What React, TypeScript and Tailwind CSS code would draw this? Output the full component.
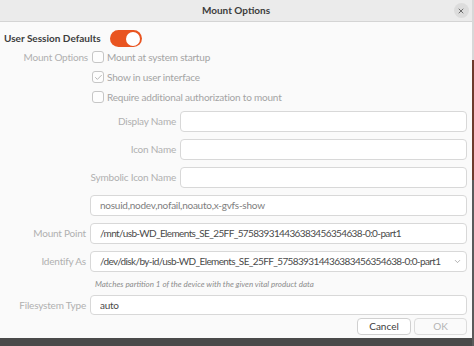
import { ChevronDown, Check, X } from "lucide-react";

const font = { fontFamily: 'Lato, "Noto Sans", sans-serif' };

const Entry = ({ value, dark, chevron, h = "h-[21px]", tight }: { value?: string; dark?: boolean; chevron?: boolean; h?: string; tight?: boolean }) => (
  <div className={`flex-1 min-w-0 ${h} rounded-[4px] border border-[#d8d8d8] bg-white flex items-center pl-[9px] pr-[4px]`}>
    <span
      className={`flex-1 min-w-0 whitespace-nowrap overflow-hidden text-[10px] ${tight ? "tracking-[-0.62px]" : "tracking-[-0.25px]"} ${dark ? "text-[#4a4a4a]" : "text-[#7e7e7e]"}`}
    >
      {value}
    </span>
    {chevron && <ChevronDown size={9} className="shrink-0 text-[#9a9a9a] ml-[2px]" />}
  </div>
);

const Label = ({ text, w }: { text?: string; w: string }) => (
  <div className={`${w} shrink-0 pr-[4px] text-right whitespace-nowrap text-[10px] tracking-[-0.2px] text-[#b0b0b0]`}>{text}</div>
);

const Check1 = ({ label, checked }: { label: string; checked?: boolean }) => (
  <div className="flex items-center h-[20px] gap-[3px]">
    <div className="w-[12px] h-[12px] rounded-[3px] border border-[#c6c6c6] bg-[#fdfdfd] flex items-center justify-center">
      {checked && <Check size={9} strokeWidth={2} className="text-[#a0a0a0]" />}
    </div>
    <span className="text-[10px] tracking-[-0.2px] text-[#a4a4a4]">{label}</span>
  </div>
);

const App = () => {
  return (
    <div className="w-[474px] h-[346px] bg-[#4a4a4a] overflow-hidden flex" style={font}>
      <div className="w-[472px] h-[338px] shrink-0 bg-[#fafafa] flex flex-col">
        <div className="h-[22px] shrink-0 bg-[#ebebeb] border-b border-[#d4d4d4] flex items-center">
          <div className="w-[22px]" />
          <div className="flex-1 text-center text-[10px] font-bold text-[#3d3d3d]">Mount Options</div>
          <div className="w-[22px] flex items-center justify-center">
            <div className="w-[15px] h-[15px] rounded-full bg-[#dcdcdc] flex items-center justify-center">
              <X size={8} strokeWidth={2.5} className="text-[#555]" />
            </div>
          </div>
        </div>

        <div className="flex flex-col pr-[5px] shrink-0">
          <div className="flex items-center h-[17px] mt-[8px] pl-[4px] gap-[9px]">
            <span className="text-[10px] font-bold text-[#3d3d3d]">User Session Defaults</span>
            <div className="w-[32px] h-[17px] rounded-full bg-[#e95420] flex items-center justify-end px-[1.5px]">
              <div className="w-[14px] h-[14px] rounded-full bg-white" />
            </div>
          </div>

          <div className="flex">
            <Label text="Mount Options" w="w-[92px] h-[20px] leading-[20px]" />
            <div className="flex flex-col">
              <Check1 label="Mount at system startup" />
              <Check1 label="Show in user interface" checked />
              <Check1 label="Require additional authorization to mount" />
            </div>
          </div>

          <div className="flex flex-col gap-[7px] mt-[4px]">
            <div className="flex items-center">
              <Label text="Display Name" w="w-[180px]" />
              <Entry />
            </div>
            <div className="flex items-center">
              <Label text="Icon Name" w="w-[180px]" />
              <Entry />
            </div>
            <div className="flex items-center">
              <Label text="Symbolic Icon Name" w="w-[180px]" />
              <Entry />
            </div>
            <div className="flex items-center">
              <Label w="w-[90px]" />
              <Entry value="nosuid,nodev,nofail,noauto,x-gvfs-show" />
            </div>
            <div className="flex items-center">
              <Label text="Mount Point" w="w-[90px]" />
              <Entry value="/mnt/usb-WD_Elements_SE_25FF_575839314436383456354638-0:0-part1" dark tight />
            </div>
            <div className="flex items-center">
              <Label text="Identify As" w="w-[90px]" />
              <Entry value="/dev/disk/by-id/usb-WD_Elements_SE_25FF_575839314436383456354638-0:0-part1" dark tight chevron />
            </div>
          </div>

          <div className="pl-[95px] h-[23px] flex items-center text-[8px] italic text-[#8c8c8c]">
            Matches partition 1 of the device with the given vital product data
          </div>

          <div className="flex items-center">
            <Label text="Filesystem Type" w="w-[90px]" />
            <Entry value="auto" dark h="h-[20px]" />
          </div>

          <div className="flex justify-end gap-[3px] mt-[3px]">
            <button className="w-[54px] h-[17px] rounded-[4px] border border-[#d0d0d0] bg-white text-[10px] text-[#3d3d3d]">Cancel</button>
            <button className="w-[53px] h-[17px] rounded-[4px] border border-[#dcdcdc] bg-[#fafafa] text-[10px] text-[#b4b4b4]">OK</button>
          </div>
        </div>
      </div>
      <div className="flex-1 flex flex-col">
        <div className="h-[60px] bg-[#d8d8d8]" />
        <div className="h-[120px] bg-[#6e3b2c]" />
        <div className="flex-1 bg-[#5a5a5a]" />
      </div>
    </div>
  );
};

export default App;
